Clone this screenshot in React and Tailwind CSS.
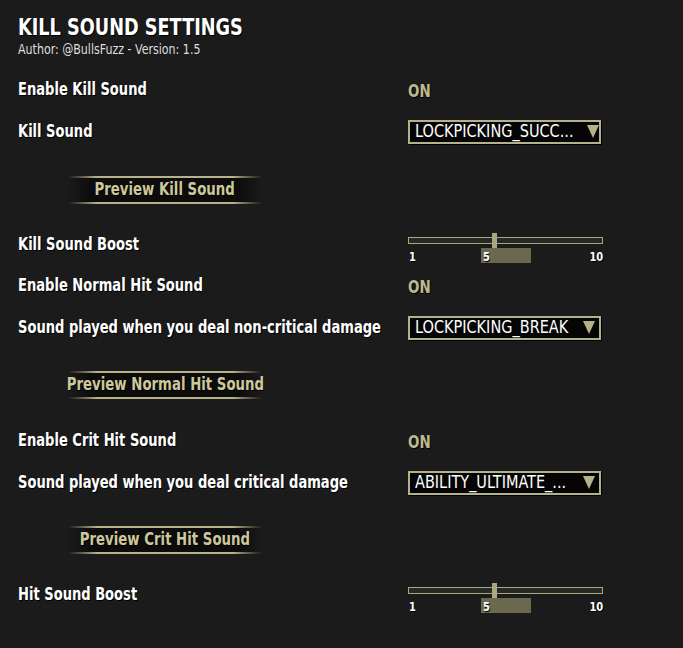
import React from 'react';

const font = { fontFamily: '"DejaVu Sans Condensed", "DejaVu Sans", sans-serif' };

// condensed look: DejaVu Condensed squeezed a bit more to match the game font
const Narrow = ({ className = '', children }) => (
    <span className={`inline-block whitespace-nowrap origin-left scale-x-[0.855] ${className}`}>{children}</span>
);

const Label = ({ children }) => (
    <div className="w-[390px] shrink-0 text-[17px] font-bold text-white [text-shadow:1px_1px_0_#000] leading-none">
        <Narrow>{children}</Narrow>
    </div>
);

const ToggleRow = ({ label }) => (
    <div className="flex items-center h-[24px]">
        <Label>{label}</Label>
        <span className="inline-block origin-left scale-x-[0.88] text-[17px] font-bold text-[#bdb98f] [text-shadow:1px_1px_0_#000] leading-none mt-[3px]">ON</span>
    </div>
);

const DropdownRow = ({ label, value }) => (
    <div className="flex items-center h-[24px]">
        <Label>{label}</Label>
        <div className="w-[193px] h-[24px] border-2 border-[#b5b18a] bg-[#050505] flex items-center justify-between pl-[5px] pr-[4px] shadow-[1px_1px_0_#000] overflow-hidden">
            <span className="inline-block whitespace-nowrap origin-left scale-x-[0.92] text-[17.5px] text-white leading-none mt-[1px]">{value}</span>
            <svg width="12" height="13" viewBox="0 0 12 13" className="shrink-0">
                <polygon points="0,0 12,0 6,13" fill="#b5b18a" />
            </svg>
        </div>
    </div>
);

const PreviewButton = ({ text }) => (
    <div className="flex h-[28px] pl-[50px]">
        <div className="relative w-[194px] h-[28px] flex items-center justify-center bg-[linear-gradient(90deg,transparent,#0c0c0c_12%,#0c0c0c_88%,transparent)]">
            <div className="absolute top-0 left-0 right-0 h-[2px] bg-[linear-gradient(90deg,transparent,#b8b28a_15%,#b8b28a_85%,transparent)]" />
            <div className="absolute bottom-0 left-0 right-0 h-[2px] bg-[linear-gradient(90deg,transparent,#b8b28a_15%,#b8b28a_85%,transparent)]" />
            <span className="inline-block whitespace-nowrap scale-x-[0.87] text-[17px] font-bold text-[#cdc89b] [text-shadow:1px_1px_0_#000] leading-none">{text}</span>
        </div>
    </div>
);

const SliderRow = ({ label }) => (
    <div className="flex items-start h-[31px]">
        <div className="h-[24px] flex items-center">
            <Label>{label}</Label>
        </div>
        <div className="w-[195px]">
            <div className="relative h-[16px] flex items-center">
                <div className="w-full h-[7px] border border-[#a9a67f] bg-[#262a27]" />
                <div className="absolute left-[84px] top-0 w-[5px] h-[16px] bg-[#aaa67e]" />
            </div>
            <div className="relative h-[15px] text-[13px] font-bold text-white leading-none [text-shadow:1px_1px_0_#000]">
                <span className="absolute left-[1px] top-[1px] inline-block origin-left scale-x-[0.85]">1</span>
                <div className="absolute left-[73px] -top-[1px] w-[50px] h-[15px] bg-[#6a6950] pl-[2px] pt-[2px]">
                    <span className="inline-block origin-left scale-x-[0.85]">5</span>
                </div>
                <span className="absolute right-[0px] top-[1px] inline-block origin-right scale-x-[0.85]">10</span>
            </div>
        </div>
    </div>
);

export default function App() {
    return (
        <div className="min-h-[648px] w-[683px] bg-[#1b1b1b] pl-[18px] pt-[16px]" style={font}>
            <h1 className="text-[23px] font-bold text-white leading-none [text-shadow:1px_1px_0_#000]">
                <Narrow className="scale-x-[0.86]">KILL SOUND SETTINGS</Narrow>
            </h1>
            <div className="mt-[4px] text-[13.5px] text-[#dedede] leading-none">
                <span className="inline-block whitespace-nowrap origin-left scale-x-[0.91]">Author: @BullsFuzz - Version: 1.5</span>
            </div>

            <div className="mt-[21px] flex flex-col">
                <ToggleRow label="Enable Kill Sound" />
                <div className="mt-[18px]"><DropdownRow label="Kill Sound" value="LOCKPICKING_SUCC..." /></div>
                <div className="mt-[32px]"><PreviewButton text="Preview Kill Sound" /></div>
                <div className="mt-[29px]"><SliderRow label="Kill Sound Boost" /></div>
                <div className="mt-[10px]"><ToggleRow label="Enable Normal Hit Sound" /></div>
                <div className="mt-[18px]"><DropdownRow label="Sound played when you deal non-critical damage" value="LOCKPICKING_BREAK" /></div>
                <div className="mt-[31px]"><PreviewButton text="Preview Normal Hit Sound" /></div>
                <div className="mt-[30px]"><ToggleRow label="Enable Crit Hit Sound" /></div>
                <div className="mt-[18px]"><DropdownRow label="Sound played when you deal critical damage" value="ABILITY_ULTIMATE_..." /></div>
                <div className="mt-[31px]"><PreviewButton text="Preview Crit Hit Sound" /></div>
                <div className="mt-[29px]"><SliderRow label="Hit Sound Boost" /></div>
            </div>
        </div>
    );
}
